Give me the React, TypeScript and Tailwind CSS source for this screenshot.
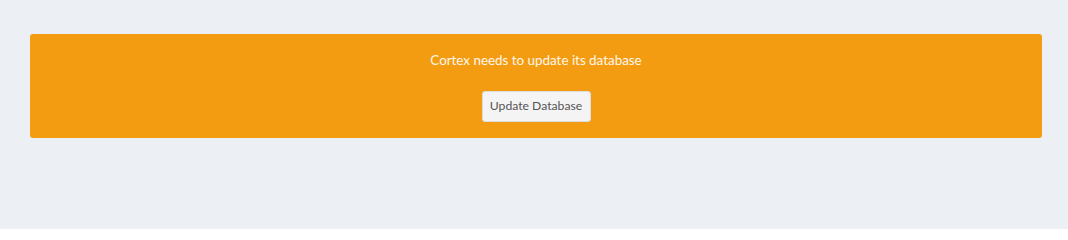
export default function App() {
  return (
    <div className="min-h-[229px] bg-[#ecf0f5] pl-[30px] pr-[26px] pt-[34px]" style={{ fontFamily: "Lato, 'Noto Sans', sans-serif" }}>
      <div className="flex flex-col items-center rounded-[3px] bg-[#f39c12] pt-[16px] pb-[16px]">
        <p className="text-[13.4px] leading-[20px] text-[#fff7ea]">Cortex needs to update its database</p>
        <button className="mt-[21px] h-[31px] w-[109px] rounded-[3px] border border-[#ddd] bg-[#f4f4f4] text-[12.2px] text-[#555]">
          Update Database
        </button>
      </div>
    </div>
  );
}
